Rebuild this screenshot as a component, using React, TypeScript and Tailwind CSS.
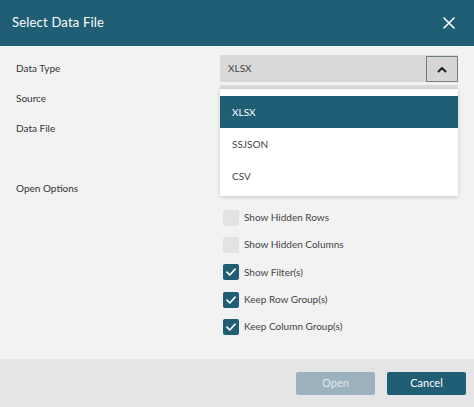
import React from 'react';

const font = { fontFamily: 'Lato, "Open Sans", Arial, sans-serif' };

const options = [
  { label: 'Show Hidden Rows', checked: false },
  { label: 'Show Hidden Columns', checked: false },
  { label: 'Show Filter(s)', checked: true },
  { label: 'Keep Row Group(s)', checked: true },
  { label: 'Keep Column Group(s)', checked: true },
];

const Checkbox: React.FC<{ checked: boolean }> = ({ checked }) => (
  <span
    className={`ml-[3px] flex h-4 w-4 items-center justify-center rounded-[2px] ${
      checked ? 'bg-[#205e76]' : 'bg-[#e3e3e3]'
    }`}
  >
    {checked && (
      <svg width="10" height="8" viewBox="0 0 10 8" fill="none">
        <path d="M1 4.2 3.8 7 9 1.2" stroke="white" strokeWidth="1.7" strokeLinecap="round" strokeLinejoin="round" />
      </svg>
    )}
  </span>
);

const App: React.FC = () => {
  return (
    <div className="flex h-[407px] w-[474px] flex-col bg-[#f2f2f2] text-[#333]" style={font}>
      {/* header */}
      <div className="flex h-[46px] items-center justify-between bg-[#205e76] pl-3 pr-[17px] text-white">
        <h1 className="text-[13px] font-normal tracking-[0.2px]">Select Data File</h1>
        <button className="flex h-4 w-4 items-center justify-center">
          <svg width="12" height="12" viewBox="0 0 12 12" fill="none">
            <path d="M1 1l10 10M11 1 1 11" stroke="white" strokeWidth="1.6" strokeLinecap="round" />
          </svg>
        </button>
      </div>
      <div className="h-px bg-[#f6f8f9]" />

      {/* body */}
      <div className="flex-1 px-4 pt-2 text-[10px]">
        <div className="relative">
          <div className="flex h-[27px] items-center">
            <div className="w-[204px]">Data Type</div>
            <div className="flex h-full w-[238px] items-center justify-between bg-[#d9d9d9] pl-2 text-[#444]">
              <span>XLSX</span>
              <span className="mt-px flex h-[26px] w-8 items-center justify-center border border-[#6f7e85] bg-[#d6d6d6]">
                <svg width="10" height="7" viewBox="0 0 10 7" fill="none">
                  <path d="M1.5 5.5 5 2l3.5 3.5" stroke="#222" strokeWidth="2" strokeLinecap="round" strokeLinejoin="round" />
                </svg>
              </span>
            </div>
          </div>
          <div className="mt-[3px] flex h-[27px] items-center">
            <div className="w-[204px]">Source</div>
            <div className="h-full w-[238px] bg-[#dcdcdc]" />
          </div>
          <div className="mt-[3px] flex h-[27px] items-center">
            <div className="w-[204px]">Data File</div>
            <div className="h-full w-[238px] bg-white" />
          </div>

          {/* open dropdown */}
          <div className="absolute left-[204px] top-[34px] z-10 w-[238px] bg-white pb-1 pt-[7px] text-[#444] shadow-[0_1px_4px_rgba(0,0,0,0.18)]">
            <div className="flex h-8 items-center bg-[#205e76] pl-3 text-white">XLSX</div>
            <div className="flex h-8 items-center pl-3">SSJSON</div>
            <div className="flex h-8 items-center pl-3">CSV</div>
          </div>
        </div>

        <div className="mt-[33px] flex h-[27px] items-center">
          <div className="w-[204px]">Open Options</div>
        </div>
        <div className="mt-[2px] flex flex-col pl-[204px]">
          {options.map((o) => (
            <div key={o.label} className="flex h-[27.3px] items-center gap-[5px]">
              <Checkbox checked={o.checked} />
              <span className="text-[#444]">{o.label}</span>
            </div>
          ))}
        </div>
      </div>

      {/* footer */}
      <div className="flex h-[48px] items-center justify-end gap-3 bg-[#e5e5e5] pr-2">
        <button className="h-[23px] w-[79px] rounded-[2px] bg-[#9cb2bc] text-[11px] text-[#e3eaed]">Open</button>
        <button className="h-[23px] w-[79px] rounded-[2px] bg-[#205e76] text-[11px] text-white">Cancel</button>
      </div>
    </div>
  );
};

export default App;
